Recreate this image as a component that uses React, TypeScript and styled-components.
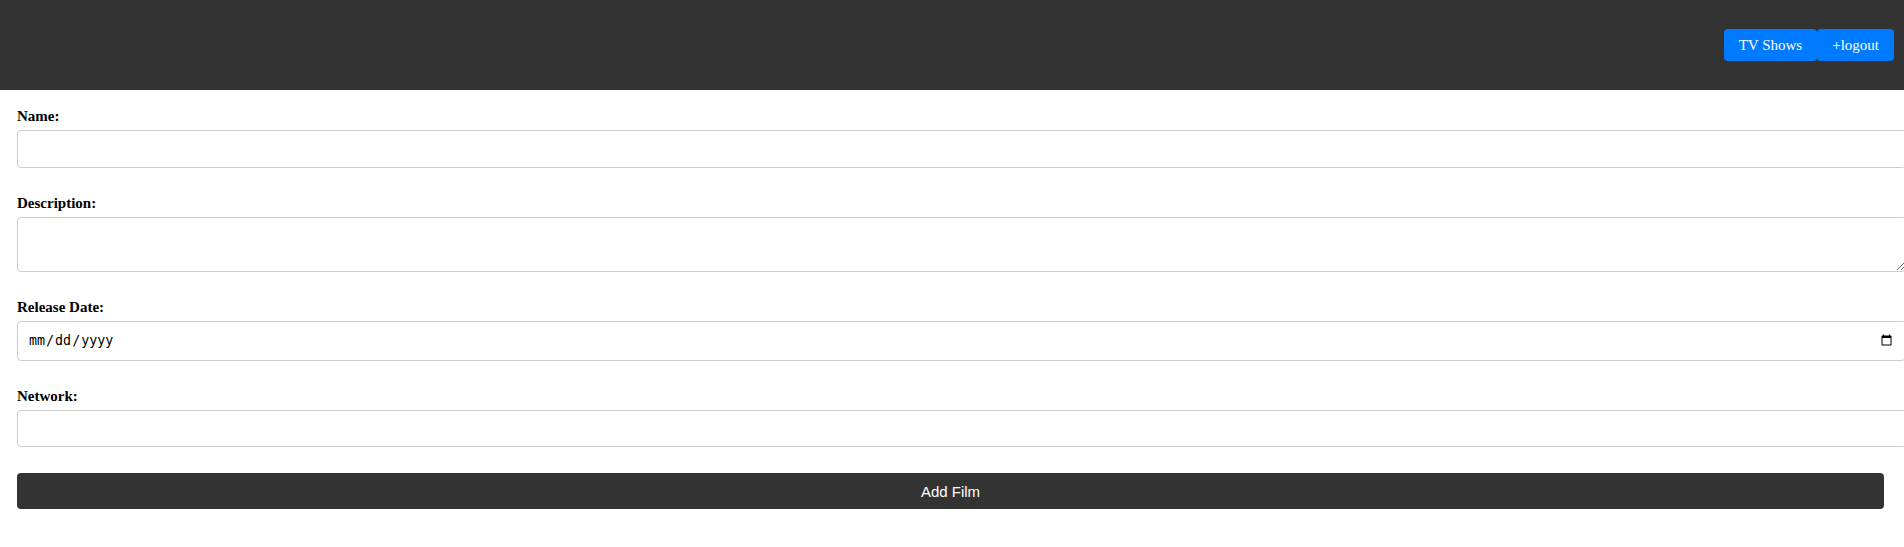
import React from "react";
import styled, { createGlobalStyle } from "styled-components";

const GlobalStyle = createGlobalStyle`
  html, body {
    margin: 0;
    padding: 0;
    background: #ffffff;
    font-family: "Liberation Serif", "Times New Roman", serif;
    overflow: hidden;
  }
`;

const Header = styled.header`
  height: 90px;
  background: #333333;
  display: flex;
  justify-content: flex-end;
  align-items: center;
  padding-right: 10px;
`;

const NavButton = styled.button`
  height: 32px;
  padding: 0 15px;
  border: none;
  border-radius: 4px;
  background: #007bff;
  color: #ffffff;
  font-family: "Liberation Serif", "Times New Roman", serif;
  font-size: 15px;
  cursor: pointer;
`;

const Form = styled.form`
  display: flex;
  flex-direction: column;
  gap: 27px;
  padding: 18px 20px 0 17px;
`;

const Group = styled.div`
  display: flex;
  flex-direction: column;
`;

const Label = styled.label`
  display: block;
  font-family: "Liberation Serif", "Times New Roman", serif;
  font-weight: bold;
  font-size: 15px;
  line-height: 17px;
  color: #000000;
  margin-bottom: 5px;
`;

const fieldBase = `
  box-sizing: content-box;
  width: 100%;
  padding: 0 10px;
  border: 1px solid #cccccc;
  border-radius: 4px;
  background: #ffffff;
  margin: 0;
`;

const TextInput = styled.input<{ $h: number }>`
  ${fieldBase}
  height: ${(p) => p.$h}px;
`;

const TextArea = styled.textarea`
  ${fieldBase}
  padding: 10px;
  height: 33px;
  display: block;
`;

const SubmitButton = styled.button`
  height: 36px;
  margin-top: -1px;
  border: none;
  border-radius: 4px;
  background: #333333;
  color: #ffffff;
  font-family: "Liberation Sans", Arial, sans-serif;
  font-size: 15px;
  cursor: pointer;
`;

export default function App() {
  return (
    <>
      <GlobalStyle />
      <Header>
        <NavButton type="button">TV Shows</NavButton>
        <NavButton type="button">+logout</NavButton>
      </Header>
      <Form onSubmit={(e) => e.preventDefault()}>
        <Group>
          <Label htmlFor="name">Name:</Label>
          <TextInput id="name" type="text" $h={36} />
        </Group>
        <Group>
          <Label htmlFor="description">Description:</Label>
          <TextArea id="description" />
        </Group>
        <Group>
          <Label htmlFor="release">Release Date:</Label>
          <TextInput id="release" type="date" $h={38} />
        </Group>
        <Group>
          <Label htmlFor="network">Network:</Label>
          <TextInput id="network" type="text" $h={35} />
        </Group>
        <SubmitButton type="submit">Add Film</SubmitButton>
      </Form>
    </>
  );
}
